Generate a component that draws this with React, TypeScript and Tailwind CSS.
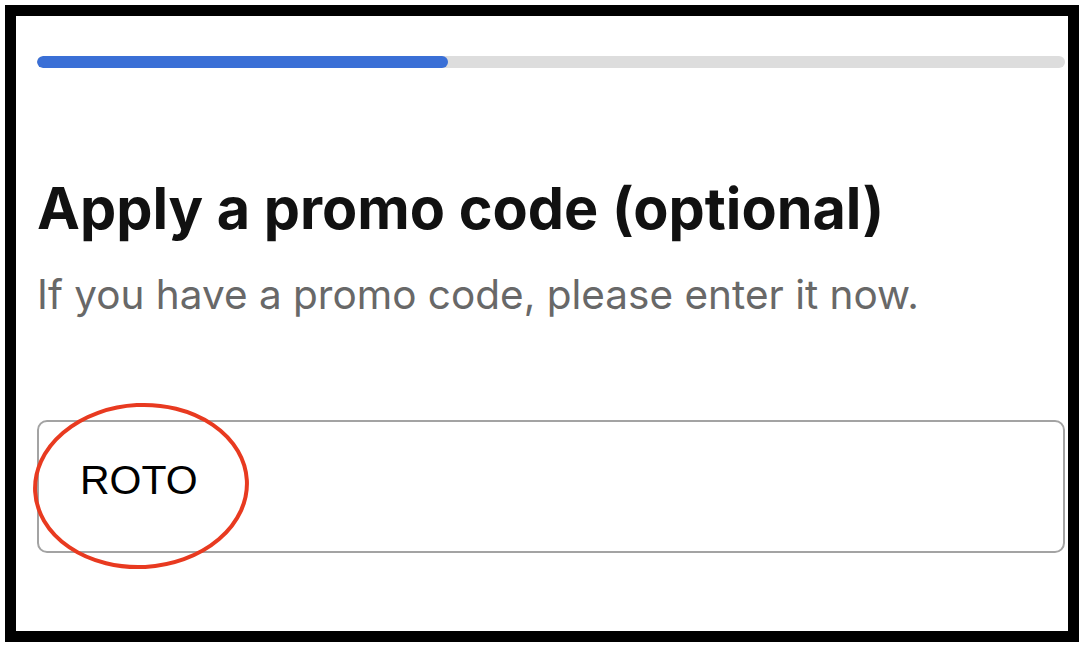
export default function App() {
  return (
    <div className="h-[647px] w-[1081px] bg-white pl-[5px] pt-[5px]">
      <div className="relative h-[637px] w-[1074px] border-[11px] border-black bg-white">
        <div className="flex flex-col pl-[21px] pr-[3px] pt-[40px]">
          {/* progress */}
          <div className="flex h-[12px] w-full overflow-hidden rounded-full bg-[#dddddd]">
            <div className="h-full w-[411px] rounded-full bg-[#3a6fd6]" />
          </div>

          <h1
            className="mt-[110px] text-[57.5px] font-bold leading-[60px] text-[#111111]"
            style={{ fontFamily: "Inter, 'Noto Sans', sans-serif" }}
          >
            Apply a promo code (optional)
          </h1>
          <p
            className="mt-[33px] text-[40.5px] leading-[48px] text-[#686868]"
            style={{ fontFamily: "Inter, 'Noto Sans', sans-serif" }}
          >
            If you have a promo code, please enter it now.
          </p>

          <div className="mt-[101px] flex h-[133px] w-full items-center rounded-[10px] border-2 border-[#a3a3a3] pb-[12px] pl-[41px]">
            <span
              className="text-[41px] text-black"
              style={{ fontFamily: "'Liberation Sans', Arial, sans-serif" }}
            >
              ROTO
            </span>
          </div>
        </div>

        {/* annotation circle */}
        <svg
          className="absolute left-[14px] top-[385px]"
          width="222"
          height="172"
          viewBox="0 0 222 172"
        >
          <ellipse
            cx="111"
            cy="85"
            rx="106"
            ry="81"
            fill="none"
            stroke="#e83a20"
            strokeWidth="4"
            transform="rotate(-3 111 85)"
          />
        </svg>
      </div>
    </div>
  );
}
